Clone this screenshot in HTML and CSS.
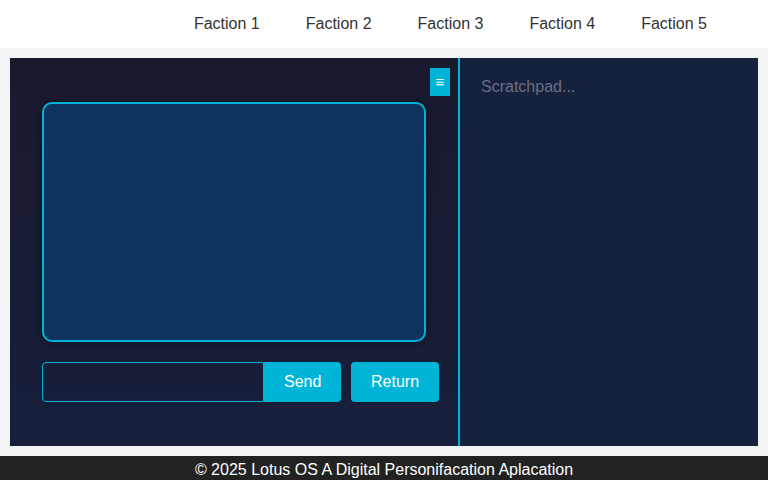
FILE: index.html
```html
<!DOCTYPE html>
<html lang="en">
<head>
<meta charset="utf-8">
<title>Lotus OS</title>
<link rel="stylesheet" href="styles.css">
</head>
<body>
<header class="site-header">
  <nav class="nav">
    <a class="nav-link" href="#">Faction 1</a>
    <a class="nav-link" href="#">Faction 2</a>
    <a class="nav-link" href="#">Faction 3</a>
    <a class="nav-link" href="#">Faction 4</a>
    <a class="nav-link" href="#">Faction 5</a>
  </nav>
</header>
<main class="workspace">
  <section class="chat-panel">
    <button class="menu-toggle" type="button">≡</button>
    <div class="chat-box"></div>
    <div class="input-row">
      <input class="chat-input" type="text">
      <button class="send-btn" type="button">Send</button>
      <button class="return-btn" type="button">Return</button>
    </div>
  </section>
  <section class="scratch-panel">
    <textarea class="scratchpad" placeholder="Scratchpad..."></textarea>
  </section>
</main>
<footer class="site-footer">© 2025 Lotus OS A Digital Personifacation Aplacation</footer>
</body>
</html>
```

FILE: styles.css
```css
* { box-sizing: border-box; }
html, body { margin: 0; padding: 0; }
body {
  background: #f3f4f6;
  font-family: "Liberation Sans", Arial, sans-serif;
  font-size: 16px;
}
.site-header {
  height: 48px;
  background: #ffffff;
  display: flex;
  justify-content: flex-end;
  align-items: center;
  padding-right: 38px;
}
.nav { display: flex; }
.nav-link {
  color: #333333;
  text-decoration: none;
  padding: 0 23px;
  line-height: 48px;
}
.workspace {
  margin: 10px;
  height: 388px;
  display: flex;
}
.chat-panel {
  flex: none;
  width: 450px;
  position: relative;
  background: linear-gradient(180deg, #1a1a2e 0%, #171f3b 100%);
  border-right: 2px solid #00b4d8;
  padding: 44px 32px;
}
.menu-toggle {
  position: absolute;
  top: 10px;
  right: 8px;
  width: 20px;
  height: 28px;
  padding: 0;
  border: none;
  background: #00b4d8;
  color: #ffffff;
  font-family: "Liberation Sans", Arial, sans-serif;
  font-size: 15px;
  line-height: 28px;
}
.chat-box {
  height: 240px;
  border: 2px solid #00b4d8;
  border-radius: 10px;
  background: #0f3460;
  box-shadow: 0 0 8px rgba(0, 0, 0, 0.45);
}
.input-row {
  display: flex;
  margin-top: 20px;
  height: 40px;
}
.chat-input {
  flex: none;
  width: 222px;
  height: 40px;
  background: transparent;
  border: 1px solid #00b4d8;
  border-radius: 4px 0 0 4px;
  color: #ffffff;
  font: inherit;
  padding: 0 10px;
  outline: none;
}
.send-btn, .return-btn {
  flex: none;
  height: 40px;
  border: none;
  background: #00b4d8;
  color: #ffffff;
  font-family: "Liberation Sans", Arial, sans-serif;
  font-size: 16px;
  padding: 0 20px;
}
.send-btn { width: 77px; border-radius: 0 4px 4px 0; }
.return-btn { width: 88px; margin-left: 10px; border-radius: 4px; }
.scratch-panel {
  flex: 1;
  min-width: 0;
  background: #16213e;
  display: flex;
}
.scratchpad {
  flex: 1;
  min-width: 0;
  background: transparent;
  border: none;
  outline: none;
  resize: none;
  padding: 20px 21px;
  color: #e5e7eb;
  font-family: "Liberation Sans", Arial, sans-serif;
  font-size: 16px;
}
.scratchpad::placeholder { color: #6b7080; }
.site-footer {
  background: #222222;
  color: #ffffff;
  text-align: center;
  padding: 5px 0 4px;
  line-height: 18px;
}
```
